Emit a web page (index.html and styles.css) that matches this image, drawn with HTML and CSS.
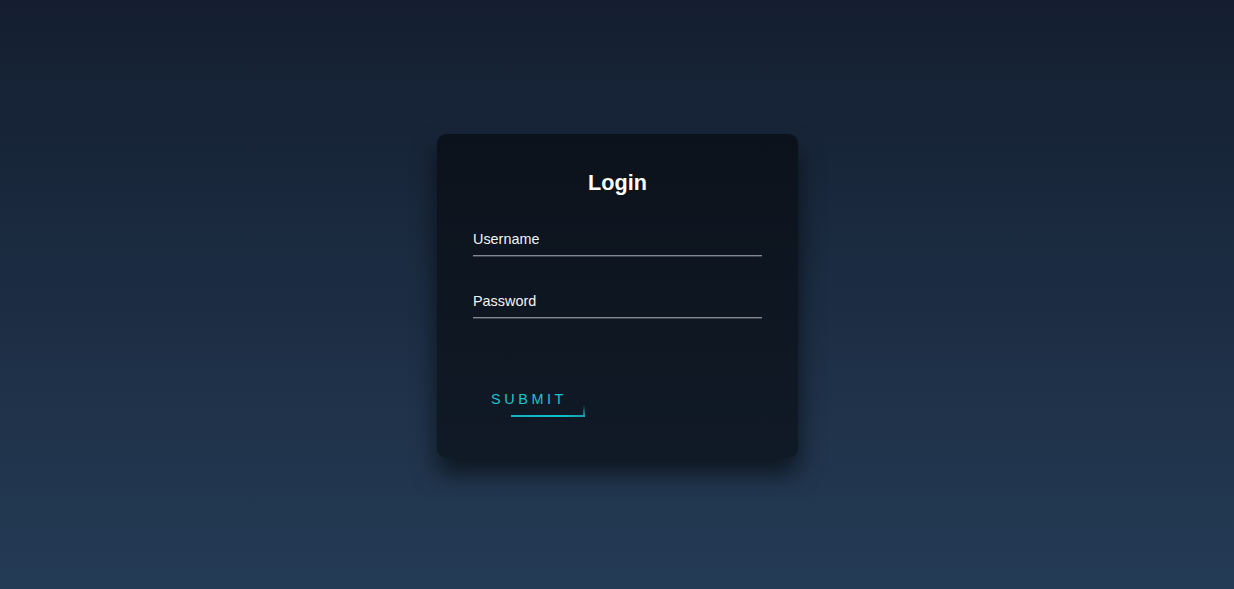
FILE: index.html
```html
<!doctype html>
<html>
    <head>
        <meta charset="utf-8" />
        <title>Login</title>
        <link rel="stylesheet" href="styles.css">
    </head>
    <body>
        <div class="login-box">
            <h2>Login</h2>
            <form>
                <div class="user-box">
                    <input type="text" name="username" id="username" required />
                    <label for="username">Username</label>
                </div>
                <div class="user-box">
                    <input type="password" name="password" id="password" required />
                    <label for="password">Password</label>
                </div>
                <a href="#" class="submit">
                    <span class="line-bottom"></span>
                    <span class="line-right"></span>
                    Submit
                </a>
            </form>
        </div>
    </body>
</html>
```

FILE: styles.css
```css
html,
body {
    height: 100%;
}

body {
    margin: 0;
    padding: 0;
    font-family: "Liberation Sans", Arial, sans-serif;
    background: linear-gradient(#141e30, #243b55);
    display: flex;
    align-items: center;
    justify-content: center;
}

.login-box {
    width: 361px;
    height: 324px;
    margin-top: 3px;
    margin-left: 1px;
    padding: 36px;
    box-sizing: border-box;
    background: rgba(0, 0, 0, 0.5);
    border-radius: 9px;
    box-shadow: 0 15px 25px rgba(0, 0, 0, 0.6);
}

.login-box h2 {
    margin: 0 0 26px;
    padding: 0;
    height: 26px;
    line-height: 26px;
    color: #fff;
    font-size: 21.6px;
    font-weight: bold;
    text-align: center;
}

.user-box {
    position: relative;
    margin-bottom: 28px;
}

.user-box input {
    display: block;
    width: 100%;
    height: 34px;
    padding: 9px 0;
    box-sizing: border-box;
    font-family: inherit;
    font-size: 14.4px;
    color: #fff;
    border: none;
    border-bottom: 1px solid #858a92;
    box-shadow: 0 1px 0 #3c414a;
    outline: none;
    background: transparent;
}

.user-box label {
    position: absolute;
    top: 0;
    left: 0;
    padding: 9px 0;
    font-size: 14.4px;
    line-height: 16px;
    color: #f4f4f4;
    pointer-events: none;
}

.submit {
    position: relative;
    display: inline-block;
    margin-top: 36px;
    padding: 9px 18px;
    font-size: 14.4px;
    line-height: 17px;
    color: #1cc4d1;
    text-decoration: none;
    text-transform: uppercase;
    letter-spacing: 3.6px;
    overflow: hidden;
}

.submit span {
    position: absolute;
    display: block;
}

.line-bottom {
    bottom: 0;
    left: 38px;
    right: 0;
    height: 2px;
    background: linear-gradient(90deg, #13b3c0, #0cc2ce 70%, #1a9aa6);
}

.line-right {
    right: 0;
    bottom: 0;
    width: 2px;
    height: 12px;
    background: linear-gradient(180deg, transparent, #16a6b2);
}
```
